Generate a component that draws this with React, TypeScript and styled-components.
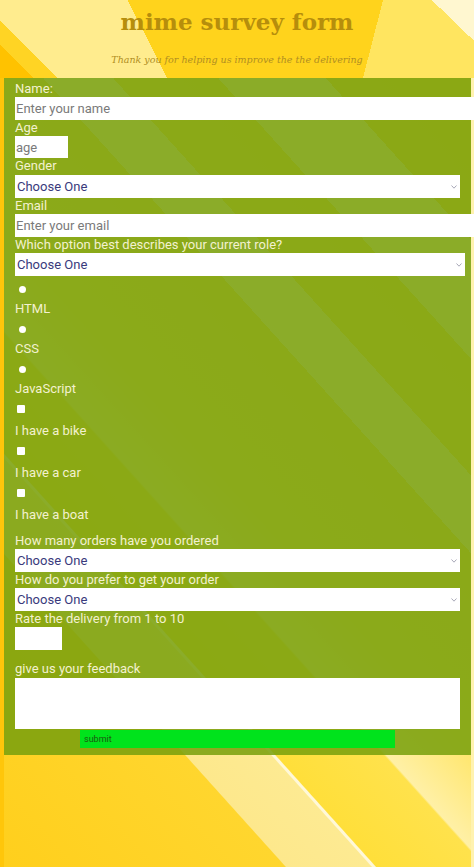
import React from "react";
import styled, { createGlobalStyle } from "styled-components";

const Global = createGlobalStyle`
  html, body { margin: 0; padding: 0; }
  body { overflow-x: hidden; }
  *, *::before, *::after { box-sizing: border-box; }
`;

const Page = styled.div`
  min-height: 100vh;
  width: 100%;
  overflow: hidden;
  font-family: Roboto, "Liberation Sans", sans-serif;
  background:
    linear-gradient(90deg, #ffc60a 0 4px, transparent 4px),
    linear-gradient(270deg, #fff2b0 0 3px, transparent 3px),
    linear-gradient(48deg, transparent 0 560px, rgba(255, 255, 255, 0.75) 560px 612px, transparent 612px 690px, rgba(255, 255, 255, 0.7) 690px 770px, transparent 770px),
    linear-gradient(48deg, #ffcf1c 0, #ffd62e 212px, #fde88c 213px, #fdea92 276px, #fff8d8 277px, #fff8d8 279px, #ffdf3a 280px, #ffe24c 360px, #fff0a6 362px, #ffe66a 430px, #ffd83a 100%);
`;

const Header = styled.header`
  height: 78px;
  display: flex;
  flex-direction: column;
  align-items: center;
  background:
    linear-gradient(45deg, #ffc200 0 24px, #ffd424 24px 41px, transparent 41px),
    linear-gradient(44deg, transparent 0 356px, #fff7d0 356px),
    linear-gradient(104.4deg, transparent 0 371px, #ffe560 371px),
    linear-gradient(63deg, transparent 0 149px, #ffd31c 149px),
    #ffec8e;
`;

const Title = styled.h1`
  margin: 9px 0 0;
  font-family: "DejaVu Serif", "Liberation Serif", serif;
  font-weight: bold;
  font-size: 23px;
  line-height: 26px;
  color: #b68e0c;
`;

const Subtitle = styled.p`
  margin: 18px 0 0;
  font-family: "DejaVu Serif", "Liberation Serif", serif;
  font-style: italic;
  font-size: 9.5px;
  line-height: 14px;
  color: #b08e22;
`;

const Form = styled.form`
  margin: 0 3px 0 4px;
  padding: 3px 11px 7px;
  background: rgba(120, 160, 13, 0.86);
  display: flex;
  flex-direction: column;
  align-items: flex-start;
`;

const Label = styled.label<{ $gap?: number }>`
  display: block;
  color: #f3f1cf;
  font-size: 13px;
  line-height: 16px;
  margin-top: ${(p) => p.$gap ?? 0}px;
`;

const TextInput = styled.input<{ $w?: string; $h?: number }>`
  display: block;
  width: ${(p) => p.$w ?? "100%"};
  height: ${(p) => p.$h ?? 23}px;
  border: none;
  margin: 0;
  padding: 0 1px;
  background: #ffffff;
  font-family: Roboto, "Liberation Sans", sans-serif;
  font-size: 13px;
  color: #222;
  outline: none;
  &::placeholder {
    color: #7a7a7a;
  }
`;

const SelectWrap = styled.div<{ $w?: string; $gap?: number }>`
  position: relative;
  width: ${(p) => p.$w ?? "100%"};
  margin-top: ${(p) => p.$gap ?? 0}px;
`;

const Select = styled.select`
  display: block;
  width: 100%;
  height: 23px;
  appearance: none;
  -webkit-appearance: none;
  border: none;
  margin: 0;
  padding: 0 2px;
  background: #ffffff;
  font-family: Roboto, "Liberation Sans", sans-serif;
  font-size: 13px;
  color: #3a3a7c;
  outline: none;
`;

const Chevron = styled.svg`
  position: absolute;
  right: 3px;
  top: 50%;
  width: 6px;
  height: 4px;
  margin-top: -2px;
  pointer-events: none;
`;

const Group = styled.div<{ $gap?: number }>`
  display: flex;
  flex-direction: column;
  align-items: flex-start;
  margin-top: ${(p) => p.$gap ?? 0}px;
`;

const Choice = styled.div<{ $spacing: number }>`
  display: flex;
  flex-direction: column;
  align-items: flex-start;
  gap: ${(p) => p.$spacing}px;
`;

const MarkLine = styled.div`
  height: 20px;
  display: flex;
  align-items: center;
`;

const Radio = styled.input`
  appearance: none;
  -webkit-appearance: none;
  width: 7px;
  height: 7px;
  margin: 0 0 0 3.5px;
  border: none;
  border-radius: 50%;
  background: #ffffff;
`;

const Check = styled.input`
  appearance: none;
  -webkit-appearance: none;
  width: 8px;
  height: 8px;
  margin: 0 0 0 2px;
  border: none;
  border-radius: 1px;
  background: #ffffff;
`;

const ChoiceText = styled.label`
  color: #f3f1cf;
  font-size: 13px;
  line-height: 20px;
`;

const TextArea = styled.textarea`
  display: block;
  width: 100%;
  height: 51px;
  margin: 1px 0 0;
  border: none;
  padding: 2px;
  resize: none;
  background: #ffffff;
  font-family: Roboto, "Liberation Sans", sans-serif;
  outline: none;
`;

const Submit = styled.button`
  align-self: center;
  width: 315px;
  height: 18px;
  margin-top: 1px;
  padding: 0 4px;
  border: none;
  background: #00e31c;
  color: #1b5a10;
  font-family: Roboto, "Liberation Sans", sans-serif;
  font-size: 9px;
  text-align: left;
`;

const SelectField = ({ w, gap }: { w?: string; gap?: number }) => (
  <SelectWrap $w={w} $gap={gap}>
    <Select defaultValue="">
      <option value="">Choose One</option>
      <option value="a">Option A</option>
      <option value="b">Option B</option>
    </Select>
    <Chevron viewBox="0 0 6 4">
      <polyline points="0.5,0.5 3,3.2 5.5,0.5" fill="none" stroke="#a8a8b8" strokeWidth="1" />
    </Chevron>
  </SelectWrap>
);

const radios = ["HTML", "CSS", "JavaScript"];
const checks = ["I have a bike", "I have a car", "I have a boat"];

export default function App() {
  return (
    <Page>
      <Global />
      <Header>
        <Title>mime survey form</Title>
        <Subtitle>Thank you for helping us improve the the delivering</Subtitle>
      </Header>
      <Form onSubmit={(e) => e.preventDefault()}>
        <Label htmlFor="name">Name:</Label>
        <TextInput id="name" type="text" placeholder="Enter your name" $w="calc(100% + 20px)" />
        <Label htmlFor="age">Age</Label>
        <TextInput id="age" type="number" placeholder="age" $w="53px" $h={22} />
        <Label>Gender</Label>
        <SelectField gap={1} />
        <Label htmlFor="email">Email</Label>
        <TextInput id="email" type="email" placeholder="Enter your email" $w="calc(100% + 20px)" />
        <Label>Which option best describes your current role?</Label>
        <SelectField w="calc(100% + 5px)" />
        <Group $gap={3}>
          {radios.map((r) => (
            <Choice key={r} $spacing={0}>
              <MarkLine>
                <Radio type="radio" name="lang" id={r} />
              </MarkLine>
              <ChoiceText htmlFor={r}>{r}</ChoiceText>
            </Choice>
          ))}
          {checks.map((c) => (
            <Choice key={c} $spacing={2}>
              <MarkLine>
                <Check type="checkbox" id={c} />
              </MarkLine>
              <ChoiceText htmlFor={c}>{c}</ChoiceText>
            </Choice>
          ))}
        </Group>
        <Label $gap={8}>How many orders have you ordered</Label>
        <SelectField />
        <Label>How do you prefer to get your order</Label>
        <SelectField />
        <Label htmlFor="rate">Rate the delivery from 1 to 10</Label>
        <TextInput id="rate" type="number" min={1} max={10} $w="47px" />
        <Label htmlFor="feedback" $gap={11}>give us your feedback</Label>
        <TextArea id="feedback" />
        <Submit type="submit">submit</Submit>
      </Form>
    </Page>
  );
}
